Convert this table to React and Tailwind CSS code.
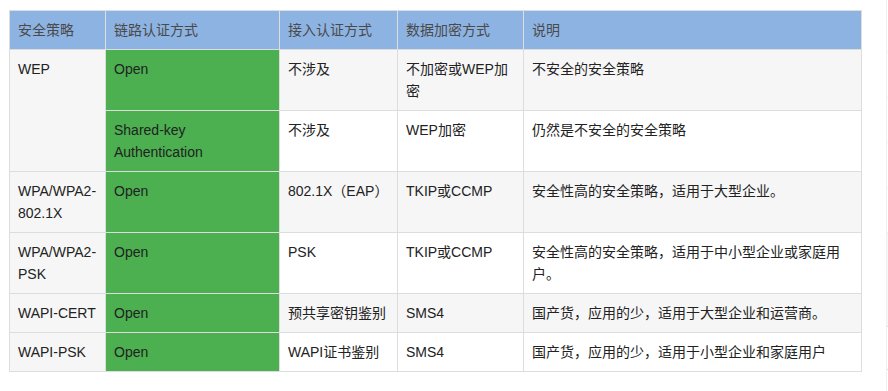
const rows = [
  { policy: 'WEP', link: 'Open', access: '不涉及', enc: '不加密或WEP加密', note: '不安全的安全策略', span: 2, alt: true },
  { link: 'Shared-key Authentication', access: '不涉及', enc: 'WEP加密', note: '仍然是不安全的安全策略', alt: false },
  { policy: 'WPA/WPA2-802.1X', link: 'Open', access: '802.1X（EAP）', enc: 'TKIP或CCMP', note: '安全性高的安全策略，适用于大型企业。', alt: true },
  { policy: 'WPA/WPA2-PSK', link: 'Open', access: 'PSK', enc: 'TKIP或CCMP', note: '安全性高的安全策略，适用于中小型企业或家庭用户。', alt: false },
  { policy: 'WAPI-CERT', link: 'Open', access: '预共享密钥鉴别', enc: 'SMS4', note: '国产货，应用的少，适用于大型企业和运营商。', alt: true },
  { policy: 'WAPI-PSK', link: 'Open', access: 'WAPI证书鉴别', enc: 'SMS4', note: '国产货，应用的少，适用于小型企业和家庭用户', alt: false },
];

const headers = ['安全策略', '链路认证方式', '接入认证方式', '数据加密方式', '说明'];

const cell = 'border border-[#dddddd] px-2 py-2 align-top leading-[22px]';

export default function App() {
  return (
    <div
      className="flex items-start bg-white text-[14px] text-[#222]"
      style={{ fontFamily: '"Liberation Sans", Arial, "Noto Sans CJK SC", sans-serif' }}
    >
      <table className="ml-[9px] mt-[10px] w-[852px] table-fixed border-collapse">
        <colgroup>
          <col className="w-[96px]" />
          <col className="w-[174px]" />
          <col className="w-[118px]" />
          <col className="w-[126px]" />
          <col className="w-[338px]" />
        </colgroup>
        <thead>
          <tr className="bg-[#8db3e2]">
            {headers.map(h => (
              <th key={h} className={`${cell} text-left font-normal text-[#4a4a4a]`}>{h}</th>
            ))}
          </tr>
        </thead>
        <tbody>
          {rows.map((r, i) => (
            <tr key={i} className={r.alt ? 'bg-[#f6f6f6]' : 'bg-white'}>
              {r.policy && (
                <td rowSpan={r.span || 1} className={`${cell} bg-[#f6f6f6]`}>
                  {r.policy}
                </td>
              )}
              <td className={`${cell} bg-[#4caf50]`}>{r.link}</td>
              <td className={cell}>{r.access}</td>
              <td className={cell}>{r.enc}</td>
              <td className={cell}>{r.note}</td>
            </tr>
          ))}
        </tbody>
      </table>
      <div className="ml-[24px] flex h-[391px] w-[3px] flex-col border-l border-[#f0f0f0]">
        <div className="h-[53px] border-b border-[#f0f0f0]" />
        <div className="h-[45px] border-b border-[#f0f0f0]" />
        <div className="h-[45px] border-b border-[#f0f0f0]" />
        <div className="h-[45px] border-b border-[#f0f0f0]" />
        <div className="h-[45px] border-b border-[#eeeeee]" />
        <div className="h-[93px] bg-[#f7f7f7]" />
        <div className="h-[44px] border-b border-t border-[#dddddd]" />
      </div>
    </div>
  );
}
